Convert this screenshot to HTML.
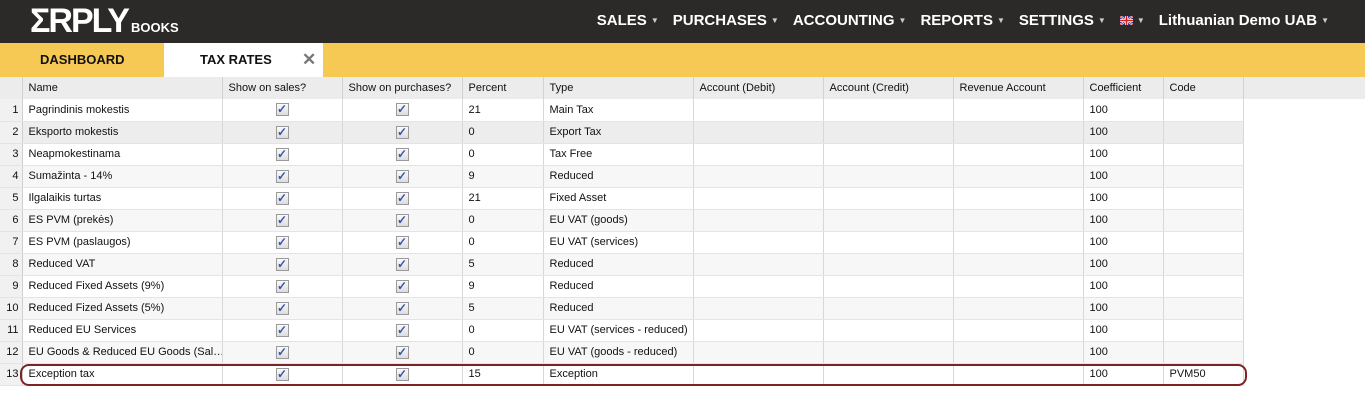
<!DOCTYPE html>
<html><head><meta charset="utf-8"><style>
*{margin:0;padding:0;box-sizing:border-box}
body{width:1365px;height:400px;background:#fff;position:relative;overflow:hidden;font-family:"Liberation Sans",sans-serif;font-size:11px;color:#111}
#top{position:absolute;left:0;top:0;width:1365px;height:43px;background:#2b2a29}
#logo{position:absolute;left:30px;top:5px;color:#fff;font-family:"Liberation Sans",sans-serif;font-weight:bold;font-size:34px;letter-spacing:-2px;line-height:32px}
#logo small{font-size:13px;letter-spacing:0;margin-left:3px}
#nav{position:absolute;right:36px;top:12px;color:#fff;font-family:"Liberation Sans",sans-serif;font-weight:bold;font-size:15px;white-space:nowrap}
#nav span{margin-left:14px}
#nav i{font-style:normal;font-size:8px;vertical-align:2px;margin-left:4px;color:#ccc}
#tabs{position:absolute;left:0;top:43px;width:1365px;height:34px;background:#f6c954}
.tab{position:absolute;top:0;height:34px;line-height:34px;font-family:"Liberation Sans",sans-serif;font-weight:bold;font-size:13px;color:#111}
table{position:absolute;left:0;top:77px;border-collapse:collapse;table-layout:fixed;width:1365px}
td{height:22px;border-right:1px solid #d8d8d8;border-bottom:1px solid #e4e4e4;padding-left:6px;white-space:nowrap;overflow:hidden}
tr.h td{background:#ececec;border-right:1px solid #d2d2d2;border-bottom:none}
td.n{text-align:right;padding:0 3px 0 0;background:#f1f1f1;border-right:1px solid #cfcfcf}
tr:nth-child(odd):not(.h) td:not(.n){background:#f7f7f7}
tr.g td:not(.n){background:#ededed!important}
td.c{text-align:center;padding:0}
.cb{display:inline-block;width:13px;height:13px;border:1px solid #9a9a9a;background:linear-gradient(#fafafa,#dcdcdc);color:#3a55a8;font-size:12px;line-height:11px;text-align:center;vertical-align:middle;font-weight:bold}
#hl{position:absolute;left:20px;top:364px;width:1227px;height:22px;border:2px solid #7d2323;border-radius:9px}
</style></head><body>
<div id="top"><div id="logo">ΣRPLY<small>BOOKS</small></div>
<div id="nav"><span>SALES<i>▼</i></span><span>PURCHASES<i>▼</i></span><span>ACCOUNTING<i>▼</i></span><span>REPORTS<i>▼</i></span><span>SETTINGS<i>▼</i></span><span><svg width="13" height="9" style="vertical-align:0"><rect width="13" height="9" fill="#2a3f8f"/><path d="M0 0L13 9M13 0L0 9" stroke="#fff" stroke-width="2"/><path d="M0 0L13 9M13 0L0 9" stroke="#c22" stroke-width=".8"/><path d="M6.5 0V9M0 4.5H13" stroke="#fff" stroke-width="3"/><path d="M6.5 0V9M0 4.5H13" stroke="#c22" stroke-width="1.6"/></svg><i>▼</i></span><span>Lithuanian Demo UAB<i>▼</i></span></div></div>
<div id="tabs"><div class="tab" style="left:40px">DASHBOARD</div>
<div class="tab" style="left:164px;width:159px;background:#fff;padding-left:36px">TAX RATES<span style="position:absolute;left:138px;color:#777;font-size:17px">✕</span></div></div>
<table>
<colgroup><col style="width:22px"><col style="width:200px"><col style="width:120px"><col style="width:120px"><col style="width:81px"><col style="width:150px"><col style="width:130px"><col style="width:130px"><col style="width:130px"><col style="width:80px"><col style="width:80px"><col style="width:122px"></colgroup>
<tr class="h"><td class="n"></td><td>Name</td><td>Show on sales?</td><td>Show on purchases?</td><td>Percent</td><td>Type</td><td>Account (Debit)</td><td>Account (Credit)</td><td>Revenue Account</td><td>Coefficient</td><td>Code</td><td style="border:none"></td></tr>
<tr><td class="n">1</td><td>Pagrindinis mokestis</td><td class="c"><span class="cb">✓</span></td><td class="c"><span class="cb">✓</span></td><td>21</td><td>Main Tax</td><td></td><td></td><td></td><td>100</td><td></td></tr>
<tr class="g"><td class="n">2</td><td>Eksporto mokestis</td><td class="c"><span class="cb">✓</span></td><td class="c"><span class="cb">✓</span></td><td>0</td><td>Export Tax</td><td></td><td></td><td></td><td>100</td><td></td></tr>
<tr><td class="n">3</td><td>Neapmokestinama</td><td class="c"><span class="cb">✓</span></td><td class="c"><span class="cb">✓</span></td><td>0</td><td>Tax Free</td><td></td><td></td><td></td><td>100</td><td></td></tr>
<tr><td class="n">4</td><td>Sumažinta - 14%</td><td class="c"><span class="cb">✓</span></td><td class="c"><span class="cb">✓</span></td><td>9</td><td>Reduced</td><td></td><td></td><td></td><td>100</td><td></td></tr>
<tr><td class="n">5</td><td>Ilgalaikis turtas</td><td class="c"><span class="cb">✓</span></td><td class="c"><span class="cb">✓</span></td><td>21</td><td>Fixed Asset</td><td></td><td></td><td></td><td>100</td><td></td></tr>
<tr><td class="n">6</td><td>ES PVM (prekės)</td><td class="c"><span class="cb">✓</span></td><td class="c"><span class="cb">✓</span></td><td>0</td><td>EU VAT (goods)</td><td></td><td></td><td></td><td>100</td><td></td></tr>
<tr><td class="n">7</td><td>ES PVM (paslaugos)</td><td class="c"><span class="cb">✓</span></td><td class="c"><span class="cb">✓</span></td><td>0</td><td>EU VAT (services)</td><td></td><td></td><td></td><td>100</td><td></td></tr>
<tr><td class="n">8</td><td>Reduced VAT</td><td class="c"><span class="cb">✓</span></td><td class="c"><span class="cb">✓</span></td><td>5</td><td>Reduced</td><td></td><td></td><td></td><td>100</td><td></td></tr>
<tr><td class="n">9</td><td>Reduced Fixed Assets (9%)</td><td class="c"><span class="cb">✓</span></td><td class="c"><span class="cb">✓</span></td><td>9</td><td>Reduced</td><td></td><td></td><td></td><td>100</td><td></td></tr>
<tr><td class="n">10</td><td>Reduced Fized Assets (5%)</td><td class="c"><span class="cb">✓</span></td><td class="c"><span class="cb">✓</span></td><td>5</td><td>Reduced</td><td></td><td></td><td></td><td>100</td><td></td></tr>
<tr><td class="n">11</td><td>Reduced EU Services</td><td class="c"><span class="cb">✓</span></td><td class="c"><span class="cb">✓</span></td><td>0</td><td>EU VAT (services - reduced)</td><td></td><td></td><td></td><td>100</td><td></td></tr>
<tr><td class="n">12</td><td>EU Goods &amp; Reduced EU Goods (Sal…</td><td class="c"><span class="cb">✓</span></td><td class="c"><span class="cb">✓</span></td><td>0</td><td>EU VAT (goods - reduced)</td><td></td><td></td><td></td><td>100</td><td></td></tr>
<tr><td class="n">13</td><td>Exception tax</td><td class="c"><span class="cb">✓</span></td><td class="c"><span class="cb">✓</span></td><td>15</td><td>Exception</td><td></td><td></td><td></td><td>100</td><td>PVM50</td></tr>
</table>
<div id="hl"></div>
</body></html>
